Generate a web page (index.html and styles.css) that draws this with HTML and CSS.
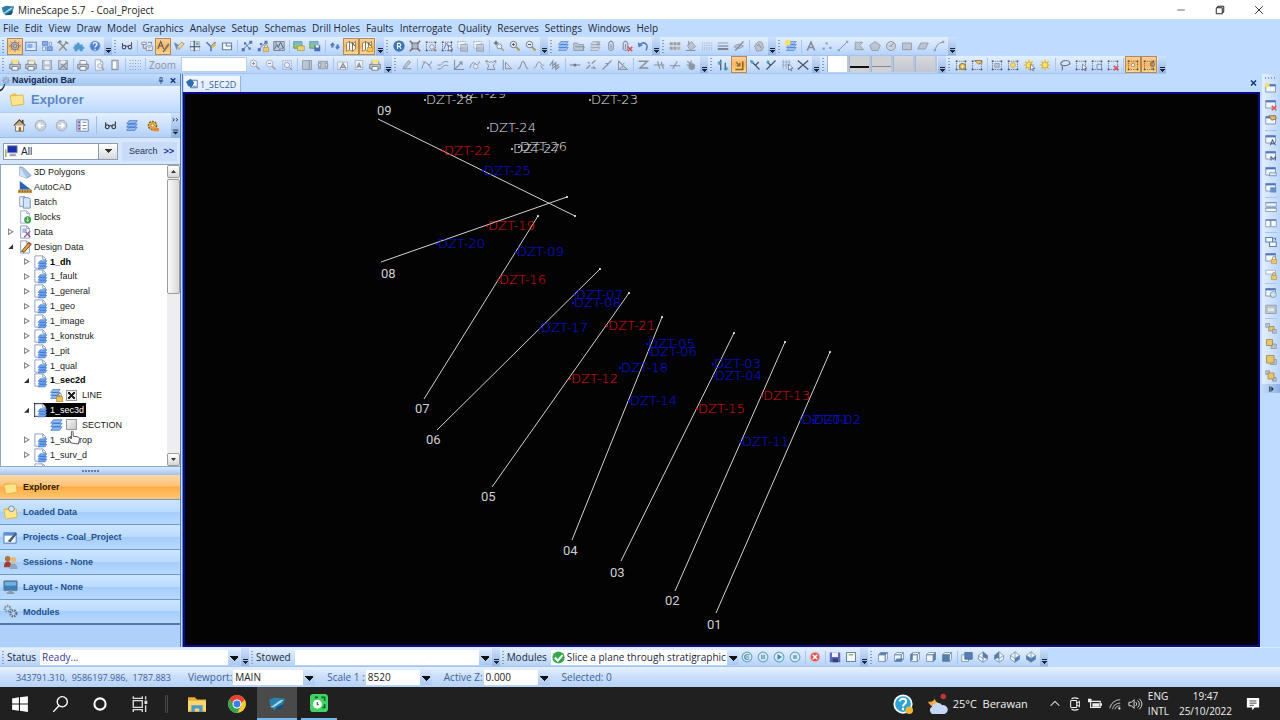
FILE: index.html
```html
<!DOCTYPE html>
<html lang="en">
<head>
    <meta charset="utf-8">
    <title>MineScape 5.7 - Coal_Project</title>
    <link rel="stylesheet" href="styles.css">
</head>
<body>
    <header class="titlebar">
        <i data-icon="app"></i>
        <h1>MineScape 5.7 &nbsp;- Coal_Project</h1>
        <div class="window-buttons">
            <button aria-label="Minimize" data-icon="minimize"></button>
            <button aria-label="Restore" data-icon="restore"></button>
            <button aria-label="Close" data-icon="close"></button>
        </div>
    </header>

    <nav class="menubar">
        <a href="#">File</a>
        <a href="#">Edit</a>
        <a href="#">View</a>
        <a href="#">Draw</a>
        <a href="#">Model</a>
        <a href="#">Graphics</a>
        <a href="#">Analyse</a>
        <a href="#">Setup</a>
        <a href="#">Schemas</a>
        <a href="#">Drill Holes</a>
        <a href="#">Faults</a>
        <a href="#">Interrogate</a>
        <a href="#">Quality</a>
        <a href="#">Reserves</a>
        <a href="#">Settings</a>
        <a href="#">Windows</a>
        <a href="#">Help</a>
    </nav>

    <!-- a star marks a pressed button, a bar marks a separator -->
    <div class="toolbar-row">
        <div class="toolbar"><span class="tools" data-tools="wheel* screen blocks tools puzzle help"></span></div>
        <div class="toolbar"><span class="tools" data-tools="glasses | tree penA* brush axis branch corner | nodes nodesLock noise | picture pictureSave | swap map* mapLock*"></span></div>
        <div class="toolbar"><span class="tools" data-tools="registered boxFull boxZoom boxPoly sheets sheets | zoomCursor zoomIn zoomOut"></span></div>
        <div class="toolbar"><span class="tools" data-tools="layers folderGray layersGray clip clipX undo"></span></div>
        <div class="toolbar"><span class="tools" data-tools="palette bucket pattern lines eye | hand"></span></div>
        <div class="toolbar"><span class="tools" data-tools="layersNew | letter points line flag pentagon circle rect skew arc"></span></div>
    </div>
    <div class="toolbar-row">
        <div class="toolbar">
            <span class="tools" data-tools="printNew printOpen save saveX | print preview page | dots |"></span>
            <label class="zoom-label" for="zoom">Zoom</label>
            <input class="zoom-input" type="text" id="zoom">
            <span class="tools" data-tools="zoomInGray zoomOutGray zoomBoxGray | pageGray pageArrows | pageA pageB printNew"></span>
        </div>
        <div class="toolbar"><span class="tools" data-tools="pencil | curve curves angle curveZoom polyDots mirror wave waveX waves | mid split ray slope | zed cut cross bomb"></span></div>
        <div class="toolbar"><span class="tools" data-tools="snapV snapCorner* snapX snapY snapGrid snapCross"></span></div>
        <div class="toolbar">
            <span class="swatches">
                <button class="swatch white" aria-label="Colour"></button>
                <button class="swatch thick" aria-label="Line weight"></button>
                <button class="swatch thin" aria-label="Line style"></button>
                <button class="swatch" aria-label="Fill"></button>
                <button class="swatch" aria-label="Pattern"></button>
            </span>
        </div>
        <div class="toolbar"><span class="tools" data-tools="boxGear boxEdit | boxGray boxYellow sunCursor sun | lasso boxCursor boxCopy boxX | boxDot* boxPin*"></span></div>
    </div>

    <main>
        <aside class="sidebar">
            <div class="side-title">
                <i data-icon="wheel"></i>
                <h2>Navigation Bar</h2>
                <button aria-label="Pin" data-icon="pin"></button>
                <button aria-label="Close" data-icon="closeSmall"></button>
            </div>
            <div class="side-heading">
                <span class="busy"></span>
                <i data-icon="folder"></i>
                <h3>Explorer</h3>
            </div>
            <div class="side-tools">
                <button aria-label="Home" data-icon="home"></button>
                <button aria-label="Back" data-icon="backGray"></button>
                <button aria-label="Forward" data-icon="forwardGray"></button>
                <button aria-label="Properties" data-icon="props"></button>
                <span class="line"></span>
                <button aria-label="Find" data-icon="glasses"></button>
                <button aria-label="Layers" data-icon="layers"></button>
                <button aria-label="Reload" data-icon="gear"></button>
                <button class="more" aria-label="More" data-icon="more"></button>
            </div>
            <div class="side-filter">
                <div class="filter-box">
                    <i data-icon="computer"></i>
                    <select aria-label="Filter"><option>All</option></select>
                </div>
                <button class="search">Search <span>&gt;&gt;</span></button>
            </div>
            <div class="tree-box">
                <ul class="tree">
                    <li><i data-icon="poly3d"></i>3D Polygons</li>
                    <li><i data-icon="autocad"></i>AutoCAD</li>
                    <li><i data-icon="batch"></i>Batch</li>
                    <li><i data-icon="block"></i>Blocks</li>
                    <li class="closed"><i data-icon="data"></i>Data</li>
                    <li class="open"><i data-icon="design"></i>Design Data</li>
                    <li class="sub closed bold"><i data-icon="doc"></i>1_dh</li>
                    <li class="sub closed"><i data-icon="doc"></i>1_fault</li>
                    <li class="sub closed"><i data-icon="doc"></i>1_general</li>
                    <li class="sub closed"><i data-icon="doc"></i>1_geo</li>
                    <li class="sub closed"><i data-icon="doc"></i>1_image</li>
                    <li class="sub closed"><i data-icon="doc"></i>1_konstruk</li>
                    <li class="sub closed"><i data-icon="doc"></i>1_pit</li>
                    <li class="sub closed"><i data-icon="doc"></i>1_qual</li>
                    <li class="sub open bold"><i data-icon="doc"></i>1_sec2d</li>
                    <li class="layer"><i data-icon="layersLock"></i><input type="checkbox" id="line" checked><label for="line">LINE</label></li>
                    <li class="sub open"><span class="selected"><i data-icon="doc"></i>1_sec3d</span></li>
                    <li class="layer"><i data-icon="layers"></i><input type="checkbox" id="section"><label for="section">SECTION</label>
                        <i class="pointer" data-icon="pointer"></i></li>
                    <li class="sub closed"><i data-icon="doc"></i>1_subcrop</li>
                    <li class="sub closed"><i data-icon="doc"></i>1_surv_d</li>
                    <li class="sub closed"><i data-icon="doc"></i>1_surv_df</li>
                </ul>
                <div class="scrollbar">
                    <button class="up" aria-label="Scroll up"></button>
                    <span class="thumb"></span>
                    <button class="down" aria-label="Scroll down"></button>
                </div>
            </div>
            <div class="side-grip"></div>
            <div class="side-nav">
                <button class="active"><i data-icon="folder"></i>Explorer</button>
                <button><i data-icon="loaded"></i>Loaded Data</button>
                <button><i data-icon="project"></i>Projects - Coal_Project</button>
                <button><i data-icon="people"></i>Sessions - None</button>
                <button><i data-icon="monitor"></i>Layout - None</button>
                <button><i data-icon="cogs"></i>Modules</button>
            </div>
        </aside>

        <section class="workspace">
            <div class="tabs">
                <button class="tab"><i data-icon="cadTab"></i>1_SEC2D</button>
                <button class="tab-close" aria-label="Close tab" data-icon="closeSmall"></button>
            </div>
            <div class="viewport">
                <svg viewBox="185 94 1073 551" id="plan" role="img" aria-label="Section plan">
                    <g id="sections"></g>
                    <g id="holes"></g>
                </svg>
            </div>
        </section>

        <div class="dock">
            <span class="tools" data-tools="winNew winX winEdit | winA winN winL winS | splitH splitV | wins winLock barLock | winRound winGray | sq1 sq2 sq3 sq4"></span>
            <button class="dock-more" aria-label="More" data-icon="dockMore"></button>
        </div>
    </main>

    <footer>
        <div class="toolbar-row status-row">
            <div class="toolbar">
                <label for="status">Status</label>
                <span class="combo status"><select id="status"><option>Ready...</option></select></span>
            </div>
            <div class="toolbar">
                <label for="stowed">Stowed</label>
                <span class="combo stowed"><select id="stowed"><option></option></select></span>
            </div>
            <div class="toolbar">
                <label for="modules">Modules</label>
                <span class="combo modules"><i data-icon="ok"></i><select id="modules"><option>Slice a plane through stratigraphic model</option></select></span>
                <span class="tools" data-tools="mBack mPause mPlay mStop | mError | saveBlue note"></span>
            </div>
            <div class="toolbar"><span class="tools" data-tools="cubeTop cubeBottom cubeLeft cubeRight cubeFront | cubes dia1 dia2 dia3 dia4"></span></div>
        </div>
        <div class="infobar">
            <span class="coords">343791.310,&nbsp; 9586197.986,&nbsp; 1787.883</span>
            <label for="vp">Viewport:</label>
            <span class="combo vp"><select id="vp"><option>MAIN</option></select></span>
            <label for="scale">Scale 1 :</label>
            <span class="combo num"><select id="scale"><option>8520</option></select></span>
            <label for="z">Active Z:</label>
            <span class="combo num"><select id="z"><option>0.000</option></select></span>
            <span class="picked">Selected: 0</span>
        </div>
        <div class="taskbar">
            <button aria-label="Start" data-icon="windows"></button>
            <button aria-label="Search" data-icon="find"></button>
            <button aria-label="Cortana" data-icon="ring"></button>
            <button aria-label="Task view" data-icon="taskview"></button>
            <span class="divider"></span>
            <button aria-label="File Explorer" data-icon="files"></button>
            <button aria-label="Chrome" data-icon="chrome"></button>
            <button class="current" aria-label="MineScape" data-icon="app"></button>
            <button class="running" aria-label="Recorder" data-icon="recorder"></button>
            <div class="tray">
                <i class="big" data-icon="helpTip"></i>
                <i class="big" data-icon="weather"></i>
                <span class="temp">25°C &nbsp;Berawan</span>
                <i data-icon="chevron"></i>
                <i data-icon="camera"></i>
                <i data-icon="battery"></i>
                <i data-icon="wifi"></i>
                <i data-icon="sound"></i>
                <span class="stack lang">ENG<br>INTL</span>
                <span class="stack clock">19:47<br>25/10/2022</span>
                <i data-icon="message"></i>
            </div>
        </div>
    </footer>

    <script src="script.js"></script>
</body>
</html>
```

FILE: styles.css
```css
* {
    box-sizing: border-box;
}

body {
    margin: 0;
    height: 100vh;
    display: flex;
    flex-direction: column;
    overflow: hidden;
    background: #bfdbff;
    color: #1e2a3c;
    font-family: "Open Sans", "Noto Sans", sans-serif;
    font-size: 10px;
}

h1, h2, h3, ul {
    margin: 0;
    padding: 0;
    font-weight: normal;
}

button {
    border: 0;
    padding: 0;
    background: none;
    color: inherit;
    font: inherit;
    display: flex;
    align-items: center;
    justify-content: center;
}

select, input {
    font: inherit;
    color: inherit;
    border: 0;
    border-radius: 0;
    margin: 0;
}

i {
    display: flex;
    flex: none;
}

svg {
    display: block;
}

.icon {
    width: 14px;
    height: 14px;
    overflow: visible;
}

/* title and menu */
.titlebar {
    display: flex;
    align-items: center;
    height: 19px;
    padding: 0 2px 0 1px;
    background: #fff;
    color: #222;
}

.titlebar h1 {
    font-size: 10px;
    margin-left: 3px;
}

.window-buttons {
    display: flex;
    margin-left: auto;
}

.window-buttons button {
    width: 39px;
    height: 19px;
}

.window-buttons .icon {
    width: 12px;
    height: 12px;
}

.menubar {
    display: flex;
    gap: 6px;
    height: 18px;
    padding-left: 3px;
    align-items: center;
}

.menubar a {
    color: #1e2a3c;
    text-decoration: none;
    white-space: nowrap;
}

/* toolbars */
.toolbar-row {
    display: flex;
    height: 19px;
    flex: none;
}

.toolbar-row + .toolbar-row {
    height: 18px;
}

.toolbar {
    display: flex;
    align-items: center;
    background: linear-gradient(#e3efff, #cfe2fd 50%, #b4d2f8);
    border-bottom: 1px solid #a5c3ec;
}

.toolbar::before {
    content: "";
    width: 2px;
    height: 13px;
    margin: 0 3px 0 2px;
    background: repeating-linear-gradient(#7fa0cf 0 1px, transparent 1px 3px);
}

.toolbar::after {
    content: "";
    align-self: stretch;
    width: 8px;
    margin-left: 1px;
    background:
        linear-gradient(#1a2233, #1a2233) 2px 11px / 5px 1px no-repeat,
        conic-gradient(from 315deg at 50% 100%, #1a2233 90deg, transparent 0) 2px 13px / 5px 3px no-repeat,
        linear-gradient(#cfe1fc, #94b5e4);
    pointer-events: none;
}

.tools {
    display: flex;
}

.tools button {
    width: 16px;
    height: 17px;
}

.tools .icon {
    width: 12px;
    height: 12px;
    opacity: 0.85;
}

.tools .pressed {
    border: 1px solid #b08a5a;
    background: linear-gradient(#fcd09a, #fbb65c 50%, #fdd68f);
}

.tools .sep {
    width: 1px;
    height: 13px;
    margin: 2px 1px 0 2px;
    background: #a9c5ee;
}

.zoom-label {
    width: 34px;
    padding-left: 2px;
    font-size: 10px;
    color: #8a93a3;
}

.zoom-input {
    width: 66px;
    height: 15px;
    border: 1px solid #b4cdf0;
    background: #fff;
}

.swatches {
    display: flex;
    align-self: stretch;
    padding-bottom: 1px;
}

.swatch {
    width: 22px;
    background: linear-gradient(#d6d8dc, #c2c6ce);
    border-left: 1px solid #aab6c8;
    border-right: 2px solid #b5c6dd;
}

.swatch.white {
    background: #fff;
}

.swatch.thick, .swatch.thin {
    background: linear-gradient(#111, #111) 0 10px / 100% 2px no-repeat, #cfd1d5;
}

.swatch.thin {
    background: linear-gradient(#888, #888) 0 10px / 100% 1px no-repeat, #cfd1d5;
}

/* main area */
main {
    display: flex;
    flex: 1;
    min-height: 0;
}

.sidebar {
    display: flex;
    flex-direction: column;
    width: 181px;
    flex: none;
    border-right: 1px solid #5a80bb;
    background: #aed0fb;
    font-family: "Liberation Sans", Arial, sans-serif;
    font-size: 9px;
}

.side-title {
    display: flex;
    align-items: center;
    height: 12px;
    background: linear-gradient(#c3dbfa, #a5c6f0);
}

.side-title h2 {
    flex: 1;
    font-size: 9px;
    font-weight: bold;
    color: #10264e;
}

.side-title i {
    opacity: 0.5;
}

.side-title .icon {
    width: 12px;
    height: 9px;
}

.side-title button + button {
    margin-right: 1px;
}

.side-heading {
    position: relative;
    display: flex;
    align-items: center;
    gap: 6px;
    height: 27px;
    padding-left: 9px;
    background: linear-gradient(#e9f3ff, #d0e4ff 60%, #bad8fd);
    border-bottom: 1px solid #b0cdf5;
}

.side-heading h3 {
    font-size: 13px;
    font-weight: bold;
    color: #5f86c2;
}

.side-heading .icon {
    width: 16px;
    height: 16px;
}

.busy {
    position: absolute;
    left: -6px;
    top: -2px;
    width: 11px;
    height: 8px;
    border-right: 1px solid #1c2c50;
    border-bottom: 2px solid #1c2c50;
    border-radius: 0 0 8px 0;
}

.side-tools {
    display: flex;
    align-items: center;
    height: 25px;
    padding-left: 9px;
    background: linear-gradient(#e4f0ff, #cde1fc 50%, #b3d0f7);
    border-bottom: 1px solid #9dbde9;
    border-radius: 0 0 5px 0;
}

.side-tools button {
    width: 21px;
    height: 22px;
}

.side-tools .icon {
    width: 13px;
    height: 13px;
}

.side-tools .line {
    width: 1px;
    height: 18px;
    margin: 0 3px;
    background: #9ebde8;
}

.side-tools .more {
    width: 9px;
    height: 25px;
    margin-left: auto;
    background: linear-gradient(#d0e2fb, #8db0e2);
}

.side-tools .more .icon {
    width: 9px;
    height: 22px;
}

.side-filter {
    display: flex;
    align-items: center;
    gap: 4px;
    height: 26px;
    padding: 0 3px;
    background: #d5e6fe;
}

.filter-box {
    display: flex;
    align-items: center;
    width: 115px;
    height: 17px;
    border: 1px solid #8d9cae;
    background: #fff;
    font-size: 10px;
}

.filter-box select {
    appearance: none;
    flex: 1;
    background: none;
    padding: 0 3px;
}

.filter-box::after {
    content: "";
    width: 18px;
    height: 15px;
    border-left: 1px solid #8d9cae;
    background:
        conic-gradient(from 315deg at 50% 100%, transparent 90deg, transparent 0),
        linear-gradient(#fff, #d5d9de);
    background:
        conic-gradient(from 315deg at 50% 100%, #333 90deg, transparent 0) 50% 50% / 7px 4px no-repeat,
        linear-gradient(#fff, #d5d9de);
    pointer-events: none;
}

.search {
    flex: 1;
    height: 19px;
    gap: 6px;
    padding-left: 4px;
    font-size: 9px;
    background: #c8dcf8;
    color: #1e3358;
}

.search span {
    color: #1c2f9c;
    font-weight: bold;
}

.tree-box {
    display: flex;
    flex: 1;
    min-height: 0;
    overflow: hidden;
    background: #fff;
    border: 1px solid #8fa6c6;
    border-width: 1px 0 1px 1px;
}

.tree {
    display: grid;
    grid-auto-rows: 1fr;
    height: 312px;
    flex: 1;
    list-style: none;
    color: #222;
}

.tree li {
    display: flex;
    align-items: center;
    gap: 2px;
    padding-left: 17px;
    position: relative;
    white-space: nowrap;
}

.tree li.sub {
    padding-left: 33px;
}

.tree li.layer {
    padding-left: 48px;
    gap: 3px;
}

.tree .open::before, .tree .closed::before {
    content: "";
    position: absolute;
    left: 7px;
    width: 6px;
    height: 7px;
    background: #8a8a8a;
    clip-path: polygon(0 0, 100% 50%, 0 100%, 0 0, 1px 2px, 1px 5px, 4px 50%, 1px 2px);
}

.tree li.open::before {
    height: 5px;
    width: 5px;
    background: #333;
    clip-path: polygon(100% 0, 100% 100%, 0 100%);
}

.tree li.sub::before {
    left: 23px;
}

.tree .bold {
    font-weight: bold;
    color: #000;
}

.tree .selected {
    display: flex;
    align-items: center;
    gap: 2px;
    height: 14px;
    padding-right: 2px;
    background: #000;
    color: #fff;
}

.tree input {
    appearance: none;
    width: 11px;
    height: 11px;
    border: 1px solid #9a9a9a;
    background: linear-gradient(135deg, #f4f4f4, #c9c9c9);
}

.tree input:checked {
    background:
        linear-gradient(45deg, transparent 40%, #222 40% 60%, transparent 60%) center / 7px 7px no-repeat,
        linear-gradient(135deg, transparent 40%, #222 40% 60%, transparent 60%) center / 7px 7px no-repeat,
        #eee;
}

.tree label {
    margin-left: 2px;
}

.tree .pointer {
    position: absolute;
    left: 66px;
    top: 12px;
    z-index: 1;
}

.scrollbar {
    display: flex;
    flex-direction: column;
    width: 13px;
    background: #eeeef0;
}

.scrollbar button {
    height: 13px;
    border: 1px solid #9c9c9c;
    border-radius: 2px;
    background: linear-gradient(#fff, #d6d6d6);
}

.scrollbar button::before {
    content: "";
    width: 5px;
    height: 3px;
    background: #333;
    clip-path: polygon(50% 0, 100% 100%, 0 100%);
}

.scrollbar .down {
    margin-top: auto;
}

.scrollbar .down::before {
    clip-path: polygon(0 0, 100% 0, 50% 100%);
}

.thumb {
    height: 115px;
    margin-top: 1px;
    border: 1px solid #9c9c9c;
    border-radius: 2px;
    background: linear-gradient(90deg, #fafafa, #d8d8da);
}

.side-grip {
    height: 8px;
    flex: none;
    background:
        repeating-linear-gradient(90deg, #5b80b8 0 2px, transparent 2px 3px) center / 17px 2px no-repeat,
        linear-gradient(#d8e9ff, #a3c4ef);
}

.side-nav {
    flex: none;
    padding-bottom: 22px;
}

.side-nav button {
    width: 100%;
    height: 25px;
    gap: 5px;
    padding-left: 3px;
    justify-content: flex-start;
    font-weight: bold;
    color: #224f90;
    border-bottom: 1px solid #6e97cb;
    background: linear-gradient(#cde5ff, #b9daff 50%, #a5cdfa 50%, #b7d9ff);
}

.side-nav button:last-child {
    border-bottom: 2px solid #4f78b2;
}

.side-nav .active {
    color: #2a1c08;
    background: linear-gradient(#ffd8a4, #ffc277 45%, #ffac42 50%, #ffc774);
}

.side-nav .icon {
    width: 15px;
    height: 15px;
}

.workspace {
    display: flex;
    flex-direction: column;
    flex: 1;
    min-width: 0;
    margin-left: 1px;
    border-left: 1px solid #5a80bb;
}

.tabs {
    display: flex;
    align-items: flex-end;
    justify-content: space-between;
    height: 18px;
    padding-left: 1px;
}

.tab {
    height: 16px;
    padding: 0 4px 0 2px;
    gap: 2px;
    background: linear-gradient(#f3f8ff, #dceaff);
    border-right: 1px solid #93b3e0;
    color: #3e5f96;
    font-size: 9px;
}

.tab .icon {
    width: 12px;
    height: 12px;
}

.tab-close {
    height: 18px;
    padding-right: 1px;
}

.tab-close .icon {
    width: 11px;
    height: 10px;
}

.viewport {
    flex: 1;
    min-height: 0;
    border: 2px solid #0a0a8c;
    background: #030303;
}

.viewport svg {
    width: 100%;
    height: 100%;
}

#sections line {
    stroke: #d2d2d2;
    stroke-width: 1;
}

#sections circle {
    fill: #fff;
}

#sections text {
    fill: #cfcfcf;
    font: 13px Roboto, sans-serif;
}

#holes text {
    font: 200 13px "DejaVu Sans", sans-serif;
}

#holes .white {
    fill: #e4e4e4;
}

#holes .red {
    fill: #e81010;
}

#holes .blue {
    fill: #1010f0;
}

.dock {
    width: 20px;
    flex: none;
    align-self: flex-start;
    padding-left: 2px;
    background: linear-gradient(90deg, #bfdbff 2px, #e3efff 2px, #bcd6f9);
}

.dock::before {
    content: "";
    display: block;
    width: 12px;
    height: 2px;
    margin: 3px auto 2px;
    background: repeating-linear-gradient(90deg, #7fa0cf 0 1px, transparent 1px 3px);
}

.dock .tools {
    flex-direction: column;
    align-items: center;
}

.dock .tools button {
    height: 16px;
}

.dock .sep {
    width: 12px;
    height: 1px;
    margin: 1px 0;
}

.dock-more {
    width: 100%;
    height: 9px;
    background: linear-gradient(90deg, #c4dafa, #8db0e2);
}

.dock-more .icon {
    width: 10px;
    height: 6px;
}

/* status rows */
.status-row {
    border-top: 1px solid #d9e8ff;
    height: 20px;
}

.status-row label {
    padding: 0 4px 0 0;
}

.combo {
    display: flex;
    align-items: center;
    height: 15px;
    background: #fff;
}

.combo select {
    appearance: none;
    flex: 1;
    min-width: 0;
    padding: 0 2px;
    background: none;
    overflow: hidden;
}

.combo::after {
    content: "";
    width: 12px;
    height: 15px;
    flex: none;
    background:
        conic-gradient(from 315deg at 50% 100%, #111 90deg, transparent 0) 50% 60% / 8px 5px no-repeat,
        linear-gradient(#d9e8ff, #a9c8f2);
    pointer-events: none;
}

.combo.status {
    width: 200px;
    color: #3a3a9c;
}

.combo.stowed {
    width: 196px;
}

.combo.modules {
    width: 188px;
    padding-left: 1px;
}

.combo.modules select {
    padding-right: 0;
}

.combo.modules .icon {
    width: 13px;
    height: 13px;
}

.combo.vp {
    width: 82px;
    margin-right: 12px;
}

.combo.num {
    width: 66px;
    margin-right: 12px;
}

.infobar {
    display: flex;
    align-items: center;
    height: 20px;
    padding-left: 16px;
    background: linear-gradient(#e6f1ff, #c9defc 50%, #b5d2f8);
    color: #3e5f96;
}

.infobar label {
    margin-right: 1px;
}

.infobar .combo {
    color: #222;
}

.coords {
    width: 172px;
    font-size: 9px;
    white-space: nowrap;
}

/* taskbar */
.taskbar {
    display: flex;
    align-items: center;
    height: 33px;
    background: #202020;
    color: #f0f0f0;
}

.taskbar > button {
    width: 40px;
    height: 33px;
}

.taskbar > button .icon {
    width: 18px;
    height: 18px;
}

.divider {
    width: 3px;
    height: 18px;
    margin: 0 9px 0 5px;
    border: 1px solid #4a4a4a;
    border-width: 0 1px;
}

.taskbar .current {
    background: #4a4a4a;
    border-bottom: 2px solid #76b9ed;
}

.taskbar .running {
    width: 36px;
    margin-left: 4px;
    border-bottom: 2px solid #76b9ed;
}

.tray {
    display: flex;
    align-items: center;
    gap: 6px;
    margin-left: auto;
    padding-right: 20px;
}

.tray .big .icon {
    width: 20px;
    height: 20px;
}

.tray .big + .big {
    margin-left: 8px;
}

.temp {
    margin-right: 14px;
    font-size: 11px;
}

.stack {
    line-height: 15px;
}

.clock {
    margin: 0 8px 0 4px;
    text-align: center;
}
```

FILE: script.js
```js
// shared pieces of the 16x16 icons
const lens = c => `<path d="M9 9l5 5" stroke="#b08840" stroke-width="2.4"/><circle cx="6" cy="6" r="4.3" fill="#e8f2fb" stroke="${c}" stroke-width="1.3"/>`;
const dashBox = '<path d="M2 3h12v11H2z" fill="none" stroke="#556" stroke-dasharray="2 1"/><path d="M1 2h2v2H1zM13 2h2v2h-2zM1 13h2v2H1zM13 13h2v2h-2z" fill="#334"/>';
const sheet = c => `<path d="M3 1h7l3 3v11H3z" fill="#f8fbff" stroke="${c}"/><path d="M10 1v3h3" fill="none" stroke="${c}"/>`;
const stack = (a, b) => `<path d="M5 10h10l-3 4H2zM5 6h10l-3 4H2zM5 2h10l-3 4H2z" fill="${a}" stroke="${b}" stroke-width=".8"/>`;
const lock = '<path d="M10 10V8a2 2 0 0 1 4 0v2" fill="none" stroke="#a88a40" stroke-width="1.2"/><path d="M8.500 10h7v5.500h-7z" fill="#f4c24c" stroke="#a07820" stroke-width=".7"/>';
const win = '<path d="M1 2h13v10H1z" fill="#f7faff" stroke="#5a6f90"/><path d="M1 2h13v2.500H1z" fill="#3c62b4"/>';
const xRed = '<path d="M9 9l6 6m0-6l-6 6" stroke="#e03c3c" stroke-width="2.2"/>';
const arrow = '<path d="M10 7v8l2-2 1.500 3 1-.6-1.300-2.900H16z" fill="#fff" stroke="#335" stroke-width=".8"/>';
const printer = '<path d="M4 7V2h7l2 2v3" fill="#fff" stroke="#667"/><path d="M1 7h14v6H1z" fill="#c2c6cc" stroke="#555"/><path d="M4 10h8v5H4z" fill="#fff" stroke="#555"/>';
const gline = (d, w = 1.300) => `<path d="${d}" fill="none" stroke="#7c838e" stroke-width="${w}"/>`;
const dk = (d, c = '#2b3d55', w = 1.600) => `<path d="${d}" fill="none" stroke="${c}" stroke-width="${w}"/>`;
const round = (inner, c = '#5b9bb8') => `<circle cx="8" cy="8" r="6.500" fill="#d9f0f8" stroke="${c}" stroke-width="1.600"/>${inner}`;
const cube = face => `<path d="M2 5h9v9H2zM2 5l3-3h9l-3 3zM11 5l3-3v9l-3 3z" fill="#f4f9fe" stroke="#5c7896"/><path d="${face}" fill="#3f6f9f"/>`;
const dia = face => `<path d="M8 1l6 5v5l-6 4-6-4V6z" fill="#f4f9fe" stroke="#5c7896"/><path d="M8 1v14M2 6l6 4 6-4" fill="none" stroke="#5c7896"/><path d="${face}" fill="#3f6f9f"/>`;
const gold = d => `<path d="${d}" fill="#f0c050" stroke="#8c7030"/>`;
const grayFill = d => `<path d="${d}" fill="#b9c0ca" stroke="#7c8490"/>`;
const sunShape = '<path d="M8 1v14M1 8h14M3 3l10 10M13 3L3 13" stroke="#e0b020" stroke-width="1.500"/><circle cx="8" cy="8" r="4" fill="#ffe04a" stroke="#c89a18"/>';
const folderShape = '<path d="M1 4l5-2 2 2h6v10l-11 1z" fill="#eec64e"/><path d="M1 5l13-1 1 9-12 2z" fill="#fbe48c" stroke="#d8aa3c" stroke-width=".7"/>';

const icons = {
    app: '<path d="M1 5l5-2 9 1-3 9-7 1-3-4z" fill="#2c7fa8"/><path d="M2 11c4 0 6-6 12-6l-3 3c-3 1-4 4-8 4z" fill="#a6d8ee"/><path d="M6 14c2-3 4-4 8-5l-2 4z" fill="#164f78"/>',
    minimize: '<path d="M3 8h10" stroke="#333"/>',
    restore: '<path d="M3 5h8v8H3zM5 5V3h8v8h-2" fill="none" stroke="#222" stroke-width="1.300"/>',
    close: '<path d="M3 3l10 10M13 3L3 13" stroke="#222" stroke-width="1.200"/>',
    closeSmall: '<path d="M4 4l8 8M12 4l-8 8" stroke="#14387c" stroke-width="2.500"/>',
    pin: '<path d="M6 3h4v6H6zM4 9h8M8 9v5" fill="none" stroke="#14387c" stroke-width="1.300"/>',
    wheel: '<path d="M8 0v16M0 8h16M2 2l12 12M14 2L2 14" stroke="#6c86b0" stroke-width="1.200"/><circle cx="8" cy="8" r="5" fill="none" stroke="#5672a4" stroke-width="1.600"/><circle cx="8" cy="8" r="2" fill="#c6d4ea" stroke="#5672a4"/>',
    screen: '<path d="M1 3h14v11H1z" fill="#f2f7ff" stroke="#4f78bd" stroke-width="1.500"/><path d="M3 5h7v6H3z" fill="#7fa8e6"/><path d="M11 5h2v6h-2z" fill="#c0d5f4"/>',
    blocks: '<path d="M2 2h7v5H2zM8 9h7v5H8z" fill="#7ba4e6" stroke="#3f66b0"/><path d="M2 9h4v5H2zM11 3h3v4h-3z" fill="#e5effc" stroke="#6b87b8"/>',
    tools: '<path d="M3 3l10 11" stroke="#7b8794" stroke-width="2.200"/><path d="M13 3L3 14" stroke="#9a8450" stroke-width="2"/><path d="M1 4l3-3 2 2M11 2l4 3" stroke="#5b6978" stroke-width="1.500" fill="none"/>',
    puzzle: '<path d="M2 6h3c-1-3 4-4 4 0h4v3c3-1 3 4 0 3v3H9c1-3-4-3-3 0H2v-3c-2 0-2-3 0-3z" fill="#3f8fc4"/>',
    help: '<circle cx="8" cy="8" r="7" fill="#3a72cc" stroke="#a5c2ee"/><path d="M5.500 6c0-4 6-3 5 .4C10 8 8 8 8 10M8 11.500v2" stroke="#fff" stroke-width="1.700" fill="none"/>',
    glasses: '<path d="M2 4v4M14 3v4M6.500 9q1.500-2 3 0" stroke="#333a48" fill="none" stroke-width="1.400"/><circle cx="4" cy="9.500" r="2.300" fill="#dde5f0" stroke="#333a48" stroke-width="1.500"/><circle cx="12" cy="9.500" r="2.300" fill="#dde5f0" stroke="#333a48" stroke-width="1.500"/>',
    tree: '<path d="M1 3h6v3H1zM7 8h8v6H7z" fill="#fff" stroke="#667"/><path d="M3 6v5h4M9 3h5v3" fill="none" stroke="#556"/><path d="M9 10h4M9 12h4" stroke="#99a"/>',
    penA: '<path d="M1 12l4-10 4 10M3 8h4" fill="none" stroke="#445" stroke-width="1.400"/><path d="M15 5l-6 9-1 2 2-1 6-9z" fill="#7aa4d8" stroke="#345"/>',
    brush: '<path d="M1 3l6 3-2 8z" fill="#4f7fcc"/><path d="M6 9l5-6 4 2-7 8z" fill="#f1d38c" stroke="#9a8040"/>',
    axis: '<path d="M2 2h12v12H2z" fill="#e6eefa" stroke="#9ab"/><path d="M7 1v14M1 9h14" stroke="#235" stroke-width="1.500"/><path d="M9 3h4v4H9z" fill="#6ab074"/>',
    branch: '<path d="M2 3l6 6v6M8 9l6-6" stroke="#3560a8" fill="none" stroke-width="2"/><path d="M8 8l5-4 2 3-5 4z" fill="#e5b33c"/>',
    corner: '<path d="M2 4h12v9H2z" fill="#fff" stroke="#54719c" stroke-width="1.600"/><path d="M7 4v4h7" stroke="#54719c" fill="none" stroke-width="1.500"/>',
    nodes: '<path d="M2 13L13 3M5 4l7 8" stroke="#54719c" stroke-width="1.300"/><path d="M11 1h4v4h-4zM1 11h4v4H1zM4 3h3v3H4zM10 10h3v3h-3z" fill="#3a62aa"/>',
    nodesLock: '<path d="M2 13L12 3" stroke="#54719c" stroke-width="1.300"/><path d="M10 1h4v4h-4zM1 11h4v4H1zM4 4h3v3H4z" fill="#3a62aa"/>' + lock,
    noise: '<path d="M1 2h14v12H1z" fill="#b9c6da" stroke="#556"/><path d="M2 12l3-6 2 4 3-7 4 8M3 4h2M11 11h2M8 12h2" fill="none" stroke="#345" stroke-width="1.200"/>',
    picture: '<path d="M1 2h11v9H1z" fill="#7ec46c" stroke="#3c7a3c"/><path d="M1 2h11v3H1z" fill="#6aa8e4"/><path d="M6 8h9v6H6z" fill="#f5d25c" stroke="#a98924"/>',
    pictureSave: '<path d="M1 2h11v9H1z" fill="#7ec46c" stroke="#3c7a3c"/><path d="M1 2h11v3H1z" fill="#6aa8e4"/><path d="M7 7h8v8H7z" fill="#3c5cac"/><path d="M9 7h4v3H9z" fill="#fff"/>',
    swap: '<path d="M1 7l4-4 3 4H6v3H3V7zM8 9h2V6h3v3h2l-4 4z" fill="#3569b8"/>',
    map: '<path d="M2 4l4-2v11l-4 2zM6 2l4 3v10l-4-2zM10 5l4-3v10l-4 3z" fill="#fff" stroke="#565"/><path d="M9 3l4 5" stroke="#445" stroke-width="1.500"/>',
    registered: '<circle cx="8" cy="8" r="7.500" fill="#2464a8"/><path d="M6 12V4.500h3q2.500 2 0 4H6m2.500 0L11 12" fill="none" stroke="#fff" stroke-width="1.500"/>',
    boxFull: '<path d="M4 4h8v8H4z" fill="#aab2be" stroke="#445"/><path d="M1 1l4 4M15 1l-4 4M1 15l4-4M15 15l-4-4" stroke="#7a4a3a" stroke-width="1.800"/>',
    boxZoom: dashBox + '<g transform="translate(5 5) scale(.7)">' + lens('#667') + '</g>',
    boxPoly: dashBox + '<path d="M4 12l3-8 3 5 4-2" fill="none" stroke="#445"/>' + arrow,
    sheets: '<path d="M1 2h10v9H1z" fill="#f0f3f8" stroke="#8b95a5" stroke-dasharray="2 1"/><path d="M5 6h9v9H5z" fill="#b3bac5" stroke="#858d99"/><path d="M5 8h9" stroke="#e8ecf0"/>',
    zoomCursor: '<path d="M1 4h6M4 1v6" stroke="#334" stroke-width="1.400"/><g transform="translate(4 4) scale(.75)">' + lens('#667') + '</g>',
    zoomIn: lens('#667') + '<path d="M4 6h4M6 4v4" stroke="#334" stroke-width="1.200"/>',
    zoomOut: lens('#667') + '<path d="M4 6h4" stroke="#334" stroke-width="1.400"/>',
    layers: stack('#8fbaf4', '#2f67c0'),
    layersGray: stack('#ced3da', '#8a92a0') + gline('M10 3l4 2-4 2'),
    folderGray: grayFill('M1 4h5l2 2h6v8H1z') + gline('M3 9h12l-2 5'),
    clip: '<path d="M5 4v8q3 4 6 0V4Q8-1 5 4M8 5v7" fill="none" stroke="#7a8494" stroke-width="1.500"/>',
    clipX: '<path d="M3 4v8q3 4 6 0V4Q6-1 3 4M6 5v7" fill="none" stroke="#7a8494" stroke-width="1.500"/>' + xRed,
    undo: '<path d="M4 6c6-5 12 0 8 8" fill="none" stroke="#3b69b8" stroke-width="2"/><path d="M1 3l1 7 6-3z" fill="#3b69b8"/>',
    palette: '<path d="M1 3h4v4H1zM6 3h4v4H6zM11 3h4v4h-4zM1 9h4v4H1zM6 9h4v4H6z" fill="#98928a"/><path d="M11 9h4v4h-4z" fill="#c3a670"/>',
    bucket: grayFill('M3 7l6-5 5 7-7 5z') + gline('M1 14h13M5 1v6'),
    pattern: '<path d="M1 4h14M1 7h14" stroke="#98a2b2" stroke-dasharray="2 1"/><path d="M2 9v5M5 9v5M8 9v5M11 9v5M14 9v5" stroke="#a9b3c2"/>',
    lines: '<path d="M1 4h14" stroke="#778"/><path d="M1 8h14" stroke="#778" stroke-width="1.600"/><path d="M1 12h14" stroke="#667" stroke-width="2.400"/>',
    eye: grayFill('M1 9q6-6 13-1-6 6-13 1z') + gline('M3 14L14 2', 2),
    hand: grayFill('M2 8l3-4 3-2 4 1 2 6-2 5-7 1z') + gline('M5 8l3-2 3 5'),
    layersNew: stack('#8fbaf4', '#2f67c0') + '<path d="M0 0h7v7H0z" fill="#ffe04a"/>',
    letter: '<path d="M3 14L8 3l5 11M5 10h6" fill="none" stroke="#777f8c" stroke-width="2.200"/>',
    points: '<path d="M2 10h3v3H2zM6 3h3v3H6zM11 9h3v3h-3z" fill="#7f98bc"/>',
    line: gline('M3 13L13 3') + '<path d="M1 12h3v3H1zM12 1h3v3h-3z" fill="#7f98bc"/>',
    flag: grayFill('M3 3h10l-4 4 5 6H3z'),
    pentagon: grayFill('M8 2l7 5-3 7H4L1 7z'),
    circle: '<circle cx="8" cy="8" r="6" fill="#ccd2da" stroke="#7c8490" stroke-width="1.200"/>' + gline('M8 8l4-4M6 8h4'),
    rect: grayFill('M2 4h12v9H2z'),
    skew: grayFill('M5 4h10l-4 8H1z'),
    arc: gline('M3 14Q4 4 13 3') + '<path d="M1 12h3v3H1zM12 1h3v3h-3z" fill="#7f98bc"/>',
    printNew: printer + '<path d="M4 1h8v4H4z" fill="#ffe04a"/>',
    printOpen: printer + '<path d="M6 1h8v3H6z" fill="#e8d28c"/>',
    save: grayFill('M2 2h12v12H2z') + '<path d="M5 2h6v5H5zM5 10h6v4H5z" fill="#eef1f5"/>',
    saveX: grayFill('M2 2h12v12H2z') + '<path d="M5 2h6v4H5z" fill="#eef1f5"/>' + gline('M3 14L13 5M6 7l8 7', 1.8),
    print: printer,
    preview: sheet('#8a929e') + '<g transform="translate(5 5) scale(.7)">' + lens('#889') + '</g>',
    page: '<path d="M4 2h8v12H4z" fill="#fff" stroke="#8a929e" stroke-width="1.800"/><path d="M10 2v12" stroke="#aab"/>',
    dots: '<path d="M1 2h15M1 6h15M1 10h15M1 14h15" stroke="#7c92b8" stroke-width="1.300" stroke-dasharray="1.300 2.200"/>',
    zoomInGray: '<path d="M9 9l5 5" stroke="#999" stroke-width="2.200"/><circle cx="6" cy="6" r="4.500" fill="#eef2f8" stroke="#99a"/>' + gline('M4 6h4M6 4v4'),
    zoomOutGray: '<path d="M9 9l5 5" stroke="#999" stroke-width="2.200"/><circle cx="6" cy="6" r="4.500" fill="#eef2f8" stroke="#99a"/>' + gline('M4 6h4'),
    zoomBoxGray: '<path d="M2 2h12v12H2z" fill="none" stroke="#99a" stroke-dasharray="2 1"/><circle cx="8" cy="8" r="3.500" fill="#eef2f8" stroke="#889"/>' + gline('M11 11l4 4'),
    pageGray: grayFill('M2 2h12v12H2z') + gline('M11 2v12'),
    pageArrows: grayFill('M2 3h12v10H2z') + '<path d="M1 8l4-3v6zM15 8l-4-3v6z" fill="#eee" stroke="#777"/>',
    pageA: '<path d="M1 4h13v10H1z" fill="#f4f6fa" stroke="#98a0ac"/>' + gline('M4 13l4-7 4 7M5 11h6', 1.8),
    pageB: '<path d="M3 2h10v12H3z" fill="#f4f6fa" stroke="#98a0ac"/>' + gline('M5 12l3-6 3 6M6 10h4', 1.8),
    pencil: gline('M2 13h12') + grayFill('M3 11l7-9 3 2-7 8z'),
    curve: gline('M1 13q3-12 7-7t6-3M9 6l5 7M2 4h4'),
    curves: gline('M1 8q4 2 6-2t8-2M1 13q4 2 6-2t8-2'),
    angle: gline('M2 1v13h13M3 13l8-8M8 4h4v4', 1.5),
    curveZoom: gline('M1 12q3-10 7-6t6-3') + '<circle cx="9" cy="10" r="3" fill="#e8edf4" stroke="#889"/>',
    polyDots: gline('M1 3h3l2 2 2-2 2 2 2-2h3M3 6l2 3-2 5h10l-2-5 2-3') + gline('M1 3h2M13 3h2', 3),
    mirror: gline('M3 1v14M6 4l8 9H6z'),
    wave: gline('M1 13c5 0 4-10 7-10s3 10 7 10', 1.5),
    waveX: gline('M1 12c4 0 4-8 7-8s2 6 7 4M10 9l4 5'),
    waves: gline('M1 9l4-6v6l4-4v6l4-4M4 13l5-4v5l5-4', 1.6),
    mid: gline('M1 8h14', 1.6) + '<circle cx="8" cy="8" r="2" fill="#667"/>',
    split: gline('M2 13l5-5M9 6l5-4M4 4l2 2M11 10l3 3M8 12h4', 1.6),
    ray: gline('M2 14L14 2M6 6h3v3', 1.5),
    slope: gline('M2 2l5 6 3-3M2 3v11h12z') + grayFill('M2 14h12l-6-5z'),
    zed: gline('M2 3h12L4 12h11', 2),
    cut: gline('M1 8h14M6 3l3 10M11 4l3 9', 1.5),
    cross: gline('M1 9h14M5 13l6-10', 1.5),
    bomb: '<circle cx="9" cy="10" r="4.500" fill="#858b95"/>' + gline('M3 3l5 4M2 8h4M8 2v4', 1.5),
    snapV: dk('M5 1v14M11 5v10') + dk('M1 5h5M3 3v5', '#2a96b4', 1.8) + dk('M9 13h6M13 11v4', '#2a96b4', 1.5),
    snapCorner: dk('M3 14h10V3', '#6d5425', 2) + dk('M4 4l5 5M9 5v4H5', '#806020', 1.8),
    snapX: dk('M2 2l12 12M13 4L8 9') + dk('M2 4h4M4 2v4', '#2a96b4', 2),
    snapY: dk('M2 14L14 2M3 4l5 5') + dk('M2 4h4M4 2v4', '#2a96b4', 2),
    snapGrid: dk('M3 1v12M7 1v12M11 1v12M1 4h12M1 8h12', '#8799b4', 1) + arrow,
    snapCross: dk('M1 2l14 12M15 2L1 14'),
    boxGear: dashBox + '<circle cx="10" cy="10" r="4" fill="#f1bd45" stroke="#96701c" stroke-width="1.500"/><circle cx="10" cy="10" r="1.300" fill="#fff"/>',
    boxEdit: dashBox + '<path d="M5 2h8l2 3-5 2z" fill="#f1bd45" stroke="#665020"/>',
    boxGray: dashBox + grayFill('M5 6h6v5H5z'),
    boxYellow: dashBox + '<circle cx="8" cy="8" r="3.200" fill="#ffe04a" stroke="#c09818"/>',
    sun: sunShape,
    sunCursor: sunShape + arrow,
    lasso: '<path d="M5 9C-1 7 4 2 9 2s8 4 3 6-5 0-7 1 1 3-1 6" fill="none" stroke="#5a6270" stroke-width="1.500"/>',
    boxCursor: dashBox + arrow,
    boxCopy: dashBox + '<path d="M8 7h6v7H8z" fill="#cfe0f8" stroke="#4b6c9c"/>',
    boxX: dashBox + xRed,
    boxDot: dashBox + '<circle cx="8" cy="8" r="2.300" fill="#fff" stroke="#777"/>',
    boxPin: dashBox + '<path d="M12 3v11M10 5h5v4h-5z" fill="#b8bcc2" stroke="#554"/>',
    home: '<path d="M3 8v7h10V8" fill="#f8f1e2" stroke="#665"/><path d="M1 8l7-7 7 7" fill="#c8a878" stroke="#4a3a30" stroke-width="1.300"/><path d="M7 10h3v5H7z" fill="#9b6a3c"/><path d="M11 1h2v4h-2z" fill="#3b4558"/>',
    backGray: '<circle cx="8" cy="8" r="6.500" fill="#c9d0da" stroke="#99a4b5"/><path d="M12 8H5m3-3L5 8l3 3" fill="none" stroke="#fff" stroke-width="2"/>',
    forwardGray: '<circle cx="8" cy="8" r="6.500" fill="#c9d0da" stroke="#99a4b5"/><path d="M4 8h7M8 5l3 3-3 3" fill="none" stroke="#fff" stroke-width="2"/>',
    props: '<path d="M1 1h14v14H1z" fill="#fff" stroke="#5472a8"/><path d="M1 1h5v14H1z" fill="#9cbcf0"/><path d="M3 4h2M3 8h2M3 12h2" stroke="#d03c2c" stroke-width="2"/><path d="M8 4h5M8 8h5M8 12h5" stroke="#667"/>',
    gear: '<circle cx="8" cy="8" r="5" fill="#f0b84c" stroke="#94641c" stroke-width="2" stroke-dasharray="2.500 1.200"/><circle cx="8" cy="8" r="2" fill="#fff" stroke="#94641c"/><path d="M9 11h7v4H9z" fill="#e68a38"/>',
    more: '<path d="M3-4l3 2.500L3 1M9-4l3 2.500L9 1M3 17h10" fill="none" stroke="#123" stroke-width="1.500"/><path d="M3 20h10l-5 5z" fill="#123"/>',
    computer: '<path d="M4 2h11v8H4z" fill="#1c2fb0" stroke="#8a93a5"/><path d="M7 11h6l1 3H6z" fill="#9aa5b8"/><path d="M1 6h2v9H1z" fill="#a4b870"/>',
    poly3d: '<path d="M2 2l4 1 9 9-5 3-8-3z" fill="#a5c4e4" stroke="#7c98b8"/><path d="M2 2v10l8 3z" fill="#d3e3f4"/>',
    autocad: '<path d="M2 1v10h13z" fill="#2c62b8"/><path d="M0 11h16v4H0z" fill="#c99a4a"/><path d="M2 12v2M5 12v2M8 12v2M11 12v2M14 12v2" stroke="#6d4c14"/>',
    batch: '<path d="M2 2h6v11H2z" fill="#eef4fc" stroke="#7a93b8"/><path d="M6 3h6l2 2v10H6z" fill="#d4e4f8" stroke="#6b88b4"/>',
    block: sheet('#98a8c0') + '<circle cx="11" cy="11" r="4" fill="#3f9e4c"/><path d="M11 8v5M9 11l2 2 2-2" stroke="#c8f0c4" fill="none"/>',
    data: sheet('#8098c0') + '<path d="M5 4h5v5H5z" fill="#a0b8e4"/><path d="M7 14l7-7M9 8l5 6" stroke="#9a5a90" stroke-width="1.500"/>',
    design: sheet('#8a98a8') + '<path d="M4 13l8-10 3 2-8 9z" fill="#e0a040" stroke="#5c4020"/><path d="M12 3l3 2" stroke="#c04030" stroke-width="2"/>',
    doc: '<path d="M1 1h9l3 3v11H1z" fill="#fff" stroke="#7f95bb"/><path d="M10 1v4h3" fill="none" stroke="#7f95bb"/><g transform="translate(3 5) scale(.78)">' + stack('#6fa4ee', '#3a70c8') + '</g>',
    layersLock: '<g transform="scale(.85)">' + stack('#8fbaf4', '#2f67c0') + '</g>' + lock,
    pointer: '<path d="M5 15l-4-6 1-1 3 2V2q1-2 2 0v5l6 1q2 1 1 4l-1 4z" fill="#fff" stroke="#444"/>',
    folder: folderShape,
    loaded: folderShape + '<circle cx="9" cy="4" r="3" fill="#dbe6f4" stroke="#7088a8"/>',
    project: '<path d="M1 3h13v11H1z" fill="#f8fbff" stroke="#4a76b4"/><path d="M1 3h13v3H1z" fill="#5a8ed4"/><path d="M5 12l8-9 2 1-7 9z" fill="#4a5e7a"/>',
    people: '<circle cx="5" cy="4" r="3" fill="#b4703c"/><circle cx="11" cy="5" r="3" fill="#e6ba70"/><path d="M1 13q0-6 4-6t4 6z" fill="#a03c30"/><path d="M7 15q0-6 4-6t5 6z" fill="#8fa6bc"/>',
    monitor: '<path d="M1 1h14v10H1z" fill="#3c80bc" stroke="#5c7490"/><path d="M2 2h12v4H2z" fill="#74b0dc"/><path d="M6 11h4v2h2v2H4v-2h2z" fill="#8a98a8"/>',
    cogs: '<circle cx="5" cy="5" r="3" fill="none" stroke="#7c8a94" stroke-width="2.500" stroke-dasharray="1.600 1"/><circle cx="11" cy="10" r="3.200" fill="none" stroke="#64727c" stroke-width="2.500" stroke-dasharray="1.600 1"/>',
    cadTab: '<path d="M6 3h9v10H6z" fill="#fff" stroke="#4a70b0" stroke-width="1.300"/><path d="M0 5l6-4 5 5-3 6-5-1z" fill="#2c6fae"/><path d="M9 11h5" stroke="#3c62b4"/>',
    winNew: win + '<circle cx="3" cy="3" r="3" fill="#ffe04a"/>',
    winX: win + xRed,
    winEdit: win + '<path d="M5 1h9l1 4-6 2z" fill="#e8b840" stroke="#5c4820"/>',
    winA: win + dk('M7 15l3-7 4 7M8 13h5', '#3a4c6c', 1.4),
    winN: win + dk('M8 14V9l3 3 3-3v5', '#3a4c6c', 1.4),
    winL: win + '<path d="M6 9h9v4H6z" fill="#e4edf8" stroke="#54719c"/>',
    winS: win + '<path d="M7 7h8v7H7z" fill="#5681bd"/>',
    splitH: '<path d="M1 2h14v5H1zM1 9h14v5H1z" fill="#fff" stroke="#667c98"/><path d="M1 2.500h14M1 9.500h14" stroke="#4a6ea8"/>',
    splitV: '<path d="M1 4h6v9H1zM8 4h7v9H8z" fill="#fff" stroke="#667c98"/><path d="M1 4h14" stroke="#4a6ea8" stroke-width="2"/>',
    wins: '<path d="M1 2h9v6H1zM6 8h9v6H6z" fill="#fff" stroke="#4a6ea8" stroke-width="1.400"/><path d="M11 3h3v3" fill="none" stroke="#3569b8" stroke-width="1.500"/>',
    winLock: win + lock,
    barLock: '<path d="M1 3h13v5H1z" fill="#fff" stroke="#8a98a8"/>' + lock,
    winRound: win + '<circle cx="11" cy="10" r="4" fill="#cfe6ec" stroke="#4c8094"/>',
    winGray: grayFill('M1 3h14v11H1z') + '<path d="M4 7h8v4H4z" fill="#eceadf"/>',
    sq1: gold('M5 6h7v6H5z') + grayFill('M1 2h5v5H1zM10 10h5v5h-5z'),
    sq2: grayFill('M8 8h7v6H8z') + gold('M2 2h8v8H2z'),
    sq3: grayFill('M7 7h8v7H7z') + gold('M2 2h10v10H2z'),
    sq4: grayFill('M1 1h5v5H1zM10 10h5v5h-5z') + gold('M4 4h8v8H4z'),
    dockMore: '<path d="M5 1v14" stroke="#123" stroke-width="3"/><path d="M9 1l6 7-6 7z" fill="#123"/>',
    ok: '<circle cx="8" cy="8" r="7.500" fill="#36a84a"/><path d="M3.500 8l3.500 4 6-7" fill="none" stroke="#fff" stroke-width="2.500"/>',
    mBack: round('<path d="M11 5H8a3 3 0 0 0 0 6h3M11 8H7" fill="none" stroke="#35769c" stroke-width="1.600"/>'),
    mPause: round('<path d="M6.500 5v6M9.500 5v6" stroke="#35769c" stroke-width="1.600"/>'),
    mPlay: round('<path d="M6 4l6 4-6 4z" fill="#2f78a0"/>'),
    mStop: round('<path d="M5.500 5.500h5v5h-5z" fill="#6aa2bc"/>'),
    mError: '<circle cx="8" cy="8" r="6.500" fill="#d83c34" stroke="#f0b0a8" stroke-width="1.500"/><path d="M5 5l6 6M11 5l-6 6" stroke="#fff" stroke-width="2"/>',
    saveBlue: '<path d="M1 2h14v13H1z" fill="#4a56b0"/><path d="M4 2h8v6H4z" fill="#f2f5fc"/><path d="M5 10h7v5H5z" fill="#20285c"/>',
    note: '<path d="M2 2h12v12H2z" fill="#fdfdf0" stroke="#5c7896" stroke-width="1.400"/><path d="M5 5h6" stroke="#8ab070" stroke-width="2"/>',
    cubeTop: cube('M2 5l3-3h9l-3 3z'),
    cubeBottom: cube('M2 14l3-4h9l-3 4z'),
    cubeLeft: cube('M2 5l3-3v9l-3 3z'),
    cubeRight: cube('M11 5l3-3v9l-3 3z'),
    cubeFront: cube('M2 5h9v9H2z'),
    cubes: '<path d="M1 5h9v9H1z" fill="#fff" stroke="#5c7896"/><path d="M5 2h10v9H5z" fill="#3f6fa8" stroke="#2c5488"/>',
    dia1: dia('M8 1l6 5v5l-6-3z'),
    dia2: dia('M8 1v8l-6 2V6z'),
    dia3: dia('M8 10l6-4v5l-6 4z'),
    dia4: dia('M2 6l6 4 6-4v5l-6 4-6-4z'),
    windows: '<path d="M1 3l6-1v5.500H1zM8 2l7-1v6.500H8zM1 8.500h6V14l-6-1zM8 8.500h7V15l-7-1z" fill="#fff"/>',
    find: '<circle cx="10" cy="6" r="4.500" fill="none" stroke="#fff" stroke-width="1.200"/><path d="M7 9.500L2 15" stroke="#fff" stroke-width="1.200"/>',
    ring: '<circle cx="8" cy="8" r="5" fill="none" stroke="#fff" stroke-width="1.800"/>',
    taskview: '<path d="M2 5h8v6H2zM2 1v2h8V1M2 15v-2h8v2M13 1v3M13 9v6" fill="none" stroke="#ddd" stroke-width="1.200"/><path d="M12 5h2.500v3H12z" fill="#ddd"/>',
    files: '<path d="M0 2h6l2 2h8v11H0z" fill="#e8aa38"/><path d="M0 5h16v9H0z" fill="#fbd66c"/><path d="M3 15V9h10v6h-3v-3H6v3z" fill="#4a9ad0"/>',
    chrome: '<circle cx="8" cy="8" r="8" fill="#fbc82e"/><path d="M8 8L1.100 4A8 8 0 0 1 14.900 4z" fill="#e44336"/><path d="M1.100 4A8 8 0 0 0 8 16l3.500-6L8 8z" fill="#33a452"/><path d="M1.100 4h13.800L11 8H5z" fill="#e44336"/><circle cx="8" cy="8" r="4" fill="#fff"/><circle cx="8" cy="8" r="3.100" fill="#3c7ee6"/>',
    recorder: '<rect width="16" height="16" rx="3" fill="#43d264"/><path d="M5 4V3h2M10 3h3v3M13 9v3h-2" fill="none" stroke="#145c2c" stroke-width="1.400"/><circle cx="6.500" cy="9" r="4" fill="#fff"/><path d="M6.500 7v2.500H8" fill="none" stroke="#286c3c"/>',
    helpTip: '<circle cx="8" cy="8" r="7" fill="#2aa2d4" stroke="#fff" stroke-width="1.400"/><path d="M5.500 6c0-3 5-3 5 0 0 2-2.500 2-2.500 4M8 11v2" fill="none" stroke="#fff" stroke-width="1.700"/><circle cx="13" cy="13" r="3" fill="#f2b632"/>',
    weather: '<path d="M6 1a6 6 0 0 0 6 7c-4 5-11 1-11-2 3 1 6-1 5-5z" fill="#f2a93c"/><path d="M4 16a3.500 3.500 0 0 1 0-6 4.500 4.500 0 0 1 8-1 3.500 3.500 0 0 1 2 7z" fill="#c4d8f4"/><circle cx="13" cy="2" r="2.200" fill="#c43530"/>',
    chevron: '<path d="M3 10l5-5 5 5" fill="none" stroke="#eee" stroke-width="1.200"/>',
    camera: '<rect x="3" y="4" width="7" height="8" rx="1" fill="none" stroke="#eee" stroke-width="1.200"/><path d="M10 7l3-2v6l-3-2M4 2q4-2 8 0M4 14q4 2 8 0" fill="none" stroke="#eee" stroke-width="1.200"/>',
    battery: '<path d="M3 5h11v7H3z" fill="none" stroke="#eee" stroke-width="1.300"/><path d="M5 7h8v4H5zM14 7h2v3h-2zM0 2h4v4H0z" fill="#eee"/>',
    wifi: '<path d="M2 13A12 12 0 0 1 14 3M5 14a9 9 0 0 1 9-7M8 14a6 6 0 0 1 6-4" fill="none" stroke="#aaa" stroke-width="1.200"/><circle cx="13" cy="13" r="1.300" fill="#eee"/>',
    sound: '<path d="M1 6h3l3-3v10l-3-3H1zM9 6q2 2 0 4M11 4q4 4 0 8M13 2q6 6 0 12" fill="none" stroke="#ddd" stroke-width="1.100"/>',
    message: '<path d="M1 1h14v11h-5l-3 3v-3H1z" fill="#fff"/><path d="M4 4.500h8M4 7h8M4 9.500h5" stroke="#333"/>'
};
icons.mapLock = icons.map + lock;

function draw(name) {
    return `<svg class="icon" viewBox="0 0 16 16" fill="none" aria-hidden="true">${icons[name] || ''}</svg>`;
}

document.querySelectorAll('[data-icon]').forEach(el => {
    el.innerHTML = draw(el.dataset.icon);
});

document.querySelectorAll('[data-tools]').forEach(bar => {
    bar.innerHTML = bar.dataset.tools.split(' ').map(item => {
        if (item === '|') return '<span class="sep"></span>';
        const name = item.replace('*', '');
        const pressed = item.endsWith('*') ? ' class="pressed"' : '';
        return `<button${pressed} aria-label="${name}">${draw(name)}</button>`;
    }).join('');
});

// section lines: name, far end, near end, label
const sections = [
    ['09', 575, 216, 378, 119, 377, 110],
    ['08', 567, 197, 381, 262, 381, 273],
    ['07', 538, 216, 424, 399, 415, 408],
    ['06', 600, 269, 437, 430, 426, 439],
    ['05', 629, 293, 492, 487, 481, 496],
    ['04', 662, 317, 572, 540, 563, 550],
    ['03', 734, 333, 621, 561, 610, 572],
    ['02', 785, 342, 675, 591, 665, 600],
    ['01', 830, 352, 716, 613, 707, 624]
];

// drill holes: number, x, y, colour
const holes = [
    ['28', 426, 100, 'white'], ['29', 459, 94, 'white'], ['23', 591, 100, 'white'],
    ['24', 489, 128, 'white'], ['27', 513, 149, 'white'], ['26', 520, 147, 'white'],
    ['22', 444, 151, 'red'], ['25', 484, 171, 'blue'], ['19', 488, 226, 'red'],
    ['20', 438, 244, 'blue'], ['09', 517, 252, 'blue'], ['16', 499, 280, 'red'],
    ['07', 576, 295, 'blue'], ['08', 574, 303, 'blue'], ['17', 541, 328, 'blue'],
    ['21', 608, 326, 'red'], ['05', 648, 344, 'blue'], ['06', 650, 352, 'blue'],
    ['18', 621, 368, 'blue'], ['12', 571, 379, 'red'], ['14', 630, 401, 'blue'],
    ['03', 714, 364, 'blue'], ['04', 715, 376, 'blue'], ['15', 698, 409, 'red'],
    ['13', 763, 396, 'red'], ['11', 742, 442, 'blue'], ['01', 802, 420, 'blue'],
    ['02', 814, 420, 'blue']
];

document.getElementById('sections').innerHTML = sections.map(([name, x1, y1, x2, y2, tx, ty]) =>
    `<line x1="${x1}" y1="${y1}" x2="${x2}" y2="${y2}"/><circle cx="${x1}" cy="${y1}" r="1"/><text x="${tx}" y="${ty + 5}">${name}</text>`
).join('');

document.getElementById('holes').innerHTML = holes.map(([no, x, y, colour]) =>
    `<circle class="${colour}" cx="${x - 1}" cy="${y}" r="1"/><text class="${colour}" x="${x}" y="${y + 4}">DZT-${no}</text>`
).join('');
```
